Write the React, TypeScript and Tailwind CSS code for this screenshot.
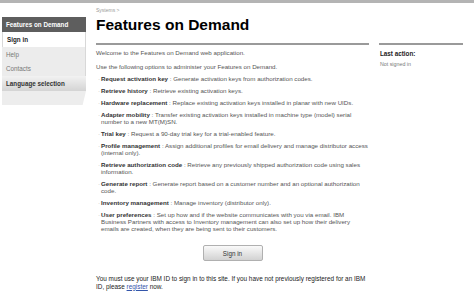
import React from "react";

const items: { label: string; text: string }[] = [
  { label: "Request activation key", text: "Generate activation keys from authorization codes." },
  { label: "Retrieve history", text: "Retrieve existing activation keys." },
  { label: "Hardware replacement", text: "Replace existing activation keys installed in planar with new UIDs." },
  { label: "Adapter mobility", text: "Transfer existing activation keys installed in machine type (model) serial number to a new MT(M)SN." },
  { label: "Trial key", text: "Request a 90-day trial key for a trial-enabled feature." },
  { label: "Profile management", text: "Assign additional profiles for email delivery and manage distributor access (internal only)." },
  { label: "Retrieve authorization code", text: "Retrieve any previously shipped authorization code using sales information." },
  { label: "Generate report", text: "Generate report based on a customer number and an optional authorization code." },
  { label: "Inventory management", text: "Manage inventory (distributor only)." },
  {
    label: "User preferences",
    text: "Set up how and if the website communicates with you via email. IBM Business Partners with access to Inventory management can also set up how their delivery emails are created, when they are being sent to their customers.",
  },
];

export default function App() {
  return (
    <div
      className="w-[474px] h-[299px] bg-white overflow-hidden text-[#555]"
      style={{ fontFamily: '"Liberation Sans", Arial, sans-serif' }}
    >
      <div className="h-[3px] bg-[#b4b4b4]" />
      <div className="flex pl-[2px]">
        {/* Sidebar */}
        <div className="w-[84px] mt-[14px] shrink-0">
          <div className="h-[15px] bg-[#5e5e5e] text-white font-bold text-[6.3px] leading-[15px] pl-[4px]">
            Features on Demand
          </div>
          <div className="h-[15px] bg-white border-x border-[#d8d8d8] text-[#222] font-bold text-[6.3px] leading-[15px] pl-[4px]">
            Sign in
          </div>
          <div className="h-[15px] bg-[#ececec] border-r border-[#d8d8d8] text-[#777] text-[6.3px] leading-[15px] pl-[4px]">
            Help
          </div>
          <div className="h-[14px] bg-[#ececec] border-r border-[#d8d8d8] text-[#777] text-[6.3px] leading-[14px] pl-[4px]">
            Contacts
          </div>
          <div className="h-[15px] bg-gradient-to-b from-[#f2f2f2] to-[#d4d4d4] text-[#333] font-bold text-[6.3px] leading-[15px] pl-[4px]">
            Language selection
          </div>
          <div className="h-[14px] bg-[#ededed] [clip-path:polygon(0_0,100%_0,96%_100%,0_100%)]" />
        </div>

        {/* Main */}
        <div className="w-[273px] ml-[10px] pt-[4px] shrink-0">
          <div className="text-[5px] leading-[7px] text-[#999]">Systems &gt;</div>
          <div className="mt-[2px] text-[15.5px] leading-[18px] font-bold text-black">Features on Demand</div>
          <div className="mt-[9px] border-t-2 border-[#9a9a9a]" />
          <div className="pt-[3.5px] text-[6.2px] leading-[7px]">
            <p>Welcome to the Features on Demand web application.</p>
            <p className="mt-[7px]">Use the following options to administer your Features on Demand.</p>
            <ul className="mt-[5px] flex flex-col gap-[5px]">
              {items.map((it) => (
                <li key={it.label} className="relative pl-[5px]">
                  <span className="absolute left-[2px] top-0 text-[#aaa]">·</span>
                  <span className="font-bold text-[#333]">{it.label}</span> : {it.text}
                </li>
              ))}
            </ul>
            <div className="mt-[13.5px] flex justify-center">
              <button className="w-[60px] h-[16px] rounded-[2px] border border-[#b0b0b0] bg-gradient-to-b from-[#fafafa] to-[#d2d2d2] text-[6.3px] text-[#333]">
                Sign in
              </button>
            </div>
            <p className="mt-[13.5px] text-[6.4px] leading-[8px] text-[#222]">
              You must use your IBM ID to sign in to this site. If you have not previously registered for an IBM ID, please{" "}
              <span className="underline text-[#3355aa]">register</span> now.
            </p>
          </div>
        </div>

        {/* Right column */}
        <div className="w-[84px] ml-[10px] pt-[40px] shrink-0">
          <div className="border-t-2 border-[#9a9a9a]" />
          <div className="mt-[5px] pl-[1px] text-[6.3px] leading-[8px] font-bold text-[#222]">Last action:</div>
          <div className="mt-[3px] pl-[1px] text-[5.3px] leading-[7px] text-[#777]">Not signed in</div>
        </div>
      </div>
    </div>
  );
}
